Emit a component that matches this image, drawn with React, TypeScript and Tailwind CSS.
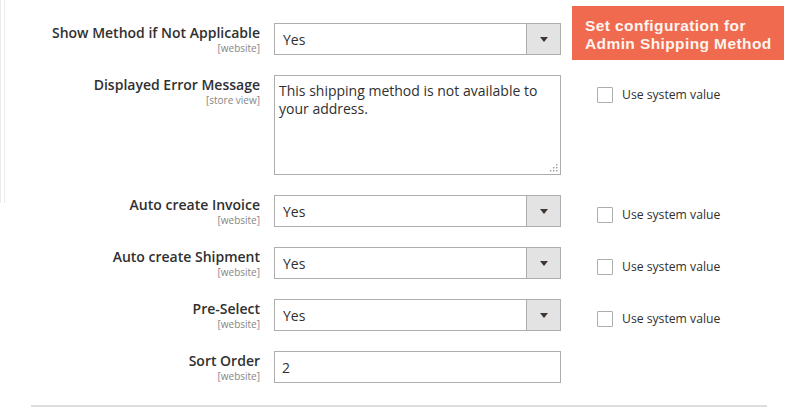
import type { ReactNode } from "react";

type Row = {
  label: string;
  scope: string;
  control: "select" | "textarea" | "input";
  value: string;
  systemValue?: boolean;
};

const rows: Row[] = [
  { label: "Show Method if Not Applicable", scope: "[website]", control: "select", value: "Yes" },
  {
    label: "Displayed Error Message",
    scope: "[store view]",
    control: "textarea",
    value: "This shipping method is not available to your address.",
    systemValue: true,
  },
  { label: "Auto create Invoice", scope: "[website]", control: "select", value: "Yes", systemValue: true },
  { label: "Auto create Shipment", scope: "[website]", control: "select", value: "Yes", systemValue: true },
  { label: "Pre-Select", scope: "[website]", control: "select", value: "Yes", systemValue: true },
  { label: "Sort Order", scope: "[website]", control: "input", value: "2" },
];

function SelectBox({ value }: { value: string }) {
  return (
    <div className="flex h-[32px] w-[287px] border border-[#adadad] bg-white">
      <div className="flex flex-1 items-center pl-[8px] text-[14px] text-[#303030]">{value}</div>
      <div className="flex w-[34px] items-center justify-center border-l border-[#adadad] bg-[#e3e3e3]">
        <svg width="8" height="5" viewBox="0 0 8 5">
          <path d="M0 0h8L4 5z" fill="#41362f" />
        </svg>
      </div>
    </div>
  );
}

function TextArea({ value }: { value: string }) {
  return (
    <div className="relative h-[100px] w-[287px] border border-[#adadad] bg-white pl-[4px] pr-[12px] pt-[6px] text-[14px] leading-[18px] text-[#303030]">
      {value}
      <svg className="absolute bottom-[2px] right-[2px]" width="8" height="8" viewBox="0 0 8 8">
        <g fill="#9a9a9a">
          <rect x="6" y="0" width="1.4" height="1.4" />
          <rect x="3" y="3" width="1.4" height="1.4" />
          <rect x="6" y="3" width="1.4" height="1.4" />
          <rect x="0" y="6" width="1.4" height="1.4" />
          <rect x="3" y="6" width="1.4" height="1.4" />
          <rect x="6" y="6" width="1.4" height="1.4" />
        </g>
      </svg>
    </div>
  );
}

function TextInput({ value }: { value: string }) {
  return (
    <div className="flex h-[32px] w-[287px] items-center border border-[#adadad] bg-white pl-[7px] text-[14px] text-[#303030]">
      {value}
    </div>
  );
}

function FieldRow({ row }: { row: Row }) {
  let control: ReactNode;
  if (row.control === "select") control = <SelectBox value={row.value} />;
  else if (row.control === "textarea") control = <TextArea value={row.value} />;
  else control = <TextInput value={row.value} />;

  return (
    <div className="flex">
      <div className="flex w-[260px] flex-col items-end pt-[1px] text-right">
        <span className="text-[14px] font-semibold leading-[18px] text-[#303030]">{row.label}</span>
        <span className="mt-[1px] text-[10px] leading-[10px] text-[#858585]">{row.scope}</span>
      </div>
      <div className="ml-[14px]">{control}</div>
      {row.systemValue ? (
        <label className="ml-[36px] flex items-center gap-[9px] self-start pt-[12px]">
          <span className="h-[16px] w-[16px] rounded-[1px] border border-[#adadad] bg-white" />
          <span className="text-[12.2px] leading-[16px] text-[#303030]">Use system value</span>
        </label>
      ) : null}
    </div>
  );
}

export default function App() {
  return (
    <div className="relative h-[408px] w-[793px] overflow-hidden bg-white font-['Open_Sans',sans-serif]">
      <div className="absolute left-0 top-0 h-[203px] w-[5px] border-x border-[#ececec]" />

      <div className="absolute left-[572px] top-[6px] h-[54px] w-[212px] whitespace-nowrap bg-[#ef6a4f] pl-[13px] pt-[11px] font-['Liberation_Sans',Arial,sans-serif] text-[15.5px] font-bold leading-[18px] tracking-[0.4px] text-[#fdf4ef]">
        Set configuration for
        <br />
        Admin Shipping Method
      </div>

      <div className="flex flex-col gap-[20px] pt-[23px]">
        {rows.map((row) => (
          <FieldRow key={row.label} row={row} />
        ))}
      </div>

      <div className="ml-[31px] mt-[22px] h-[2px] w-[736px] bg-[#dddddd]" />
    </div>
  );
}
